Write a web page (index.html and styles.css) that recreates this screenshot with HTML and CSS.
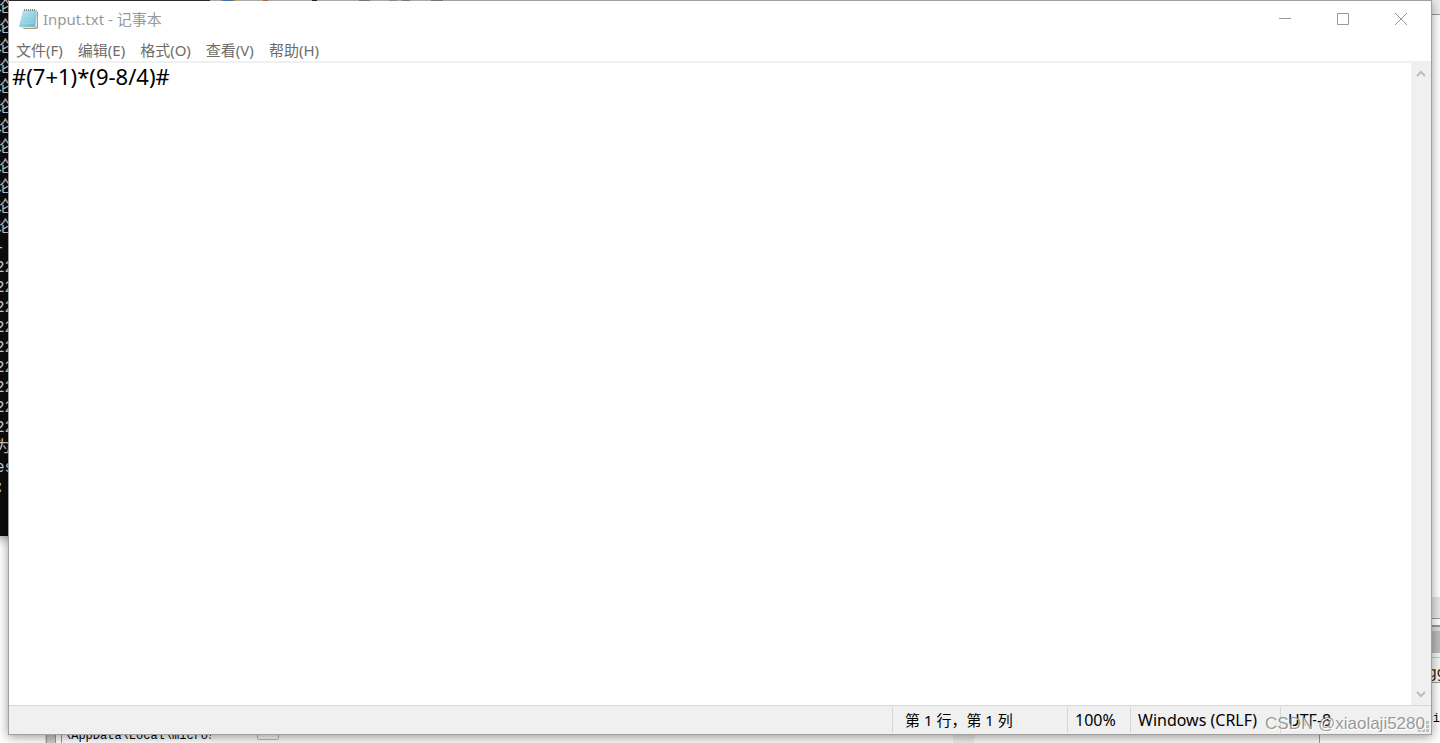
FILE: index.html
```html
<!DOCTYPE html>
<html lang="zh-CN">
<head>
<meta charset="utf-8">
<title>Input.txt - 记事本</title>
<link rel="stylesheet" href="styles.css">
</head>
<body>
<div class="desktop" aria-hidden="true">
  <div class="ide-top"></div>
  <div class="ide-side"></div>
  <div class="ide-tabs"></div>
  <div class="ide-label">gg</div>
  <div class="ide-code">#i</div>
  <div class="lower-window"><span class="rail"></span><span class="path">\AppData\Local\micros</span></div>
  <div class="lower-panel"><span class="chip"></span><span class="thumb"></span></div>
  <pre class="console">论
论
论
论
论
论
论
论
论
论
论
论
-
22
22
22
22
22
22
22
22
22
为
es
:</pre>
</div>
<main class="window">
  <div class="top-strip" aria-hidden="true"></div>
  <header class="titlebar">
    <svg class="app-icon" width="20" height="22" viewBox="0 0 20 22" aria-hidden="true">
      <defs><linearGradient id="page" x1="0" y1="0" x2="1" y2="1"><stop offset="0" stop-color="#c9edf5"/><stop offset="1" stop-color="#62b5cc"/></linearGradient></defs>
      <path d="M16 3l3 1v16l-2 1H4z" fill="#ad9873"/>
      <path d="M4 2h14v17l-3 1H2z" fill="#e4e6e0"/>
      <path d="M4 2h14l-2 17H0z" fill="url(#page)"/>
      <path d="M4 6h12M4 9h12M3 12h12M3 15h12" stroke="#9ddaea" stroke-width="1"/>
      <path d="M5.500 1v2M7.500 1v2M9.500 1v2M11.500 1v2M13.500 1v2M15.500 1v2" stroke="#758c92" stroke-width="1"/>
    </svg>
    <h1 class="title">Input.txt - 记事本</h1>
    <div class="controls">
      <button class="control" aria-label="最小化"><svg width="12" height="12" viewBox="0 0 12 12"><path d="M0 5.500h12"/></svg></button>
      <button class="control" aria-label="最大化"><svg width="12" height="12" viewBox="0 0 12 12"><path d="M.5.5h11v11H.5z"/></svg></button>
      <button class="control" aria-label="关闭"><svg width="12" height="12" viewBox="0 0 12 12"><path d="M0 0l12 12M12 0L0 12"/></svg></button>
    </div>
  </header>
  <nav class="menu">
    <button>文件(F)</button>
    <button>编辑(E)</button>
    <button>格式(O)</button>
    <button>查看(V)</button>
    <button>帮助(H)</button>
  </nav>
  <section class="editor">
    <textarea class="text" aria-label="文本编辑器" spellcheck="false">#(7+1)*(9-8/4)#</textarea>
    <div class="scrollbar">
      <button aria-label="向上滚动"><svg width="10" height="8" viewBox="0 0 10 8"><path d="M1 6l4-4 4 4"/></svg></button>
      <button aria-label="向下滚动"><svg width="10" height="8" viewBox="0 0 10 8"><path d="M1 2l4 4 4-4"/></svg></button>
    </div>
  </section>
  <footer class="status">
    <span class="cell position">第 1 行，第 1 列</span>
    <span class="cell zoom">100%</span>
    <span class="cell ending">Windows (CRLF)</span>
    <span class="cell encoding">UTF-8</span>
    <svg class="grip" width="11" height="11" viewBox="0 0 11 11" aria-hidden="true"><path d="M8 0h3v3H8zM4 4h3v3H4zM8 4h3v3H8zM0 8h3v3H0zM4 8h3v3H4zM8 8h3v3H8z"/></svg>
  </footer>
  <div class="watermark">CSDN @xiaolaji5280</div>
</main>
</body>
</html>
```
FILE: styles.css
```css
* { box-sizing: border-box; }

body {
  margin: 0;
  height: 100vh;
  overflow: hidden;
  background: #fff;
  font-family: "Noto Sans", "Noto Sans CJK SC", sans-serif;
  font-size: 15px;
}

button {
  margin: 0;
  padding: 0;
  border: 0;
  background: none;
  color: inherit;
  font: inherit;
}

.desktop {
  position: absolute;
  inset: 0;
  overflow: hidden;
  background: #fff;
}

.console {
  position: absolute;
  top: -4px;
  left: -5px;
  width: 215px;
  height: 540px;
  margin: 0;
  padding-top: 2px;
  background: #0c0c0c;
  color: #ccc;
  font: 16px/20px "Liberation Mono", "Noto Sans CJK SC", monospace;
  box-shadow: 0 2px 10px rgba(0, 0, 0, .4);
}

.ide-top {
  position: absolute;
  top: 0;
  right: 0;
  width: 200px;
  height: 15px;
  background: #eee;
  border-bottom: 1px solid #9a9aa0;
}

.ide-side {
  position: absolute;
  right: 0;
  bottom: 124px;
  width: 40px;
  height: 22px;
  background: #e6e6e6;
  border-bottom: 1px solid #9a9aa0;
}

.ide-tabs {
  position: absolute;
  right: 0;
  bottom: 60px;
  width: 40px;
  height: 58px;
  border-top: 2px solid #999;
  border-bottom: 1px solid #9a9aa0;
  background: linear-gradient(#ddd 0 4px, #bbb 4px 26px, #f4f4f4 26px 30px, #ccc 30px 31px, #f4f4f4 31px);
}

.ide-label {
  position: absolute;
  right: -6px;
  bottom: 62px;
  color: #321;
  font-size: 15px;
}

.ide-code {
  position: absolute;
  right: 0;
  bottom: 16px;
  color: #000;
  font: 12px/16px "Liberation Mono", monospace;
}

.lower-window {
  position: absolute;
  left: 45px;
  bottom: 0;
  display: flex;
  gap: 5px;
  width: 166px;
  height: 16px;
  overflow: hidden;
  border-left: 1px solid #ddd;
}

.rail {
  flex: none;
  width: 10px;
  border: solid #999;
  border-width: 0 1px;
  background: #ccc;
}

.path {
  border-left: 1px solid #999;
  padding: 1px 0 0 2px;
  color: #000;
  font: 12px/16px "Liberation Mono", monospace;
}

.lower-panel {
  position: absolute;
  left: 211px;
  right: 120px;
  bottom: 0;
  height: 16px;
  border-right: 1px solid #999;
  background: #fafafa;
}

.chip {
  position: absolute;
  left: 46px;
  bottom: 3px;
  width: 22px;
  height: 12px;
  border: 1px solid #bbb;
  border-radius: 2px;
}

.thumb {
  position: absolute;
  left: 742px;
  bottom: 0;
  width: 21px;
  height: 16px;
  background: #ececec;
}

.window {
  position: relative;
  display: flex;
  flex-direction: column;
  height: calc(100vh - 8px);
  margin: 0 8px;
  border: 1px solid #a0a0a0;
  background: #fff;
  box-shadow: 0 2px 10px rgba(0, 0, 0, .4);
}

.top-strip {
  position: absolute;
  top: -1px;
  left: 0;
  width: 436px;
  height: 1px;
  background: linear-gradient(90deg, #29292b 0 201px, #aaa 201px 210px, #c0a040 210px 213px, #3c77a8 213px 225px, #c0a040 225px 228px, #aaa 228px 254px, #c06038 254px 259px, #aaa 259px 303px, #222 303px 308px, #aaa 308px 350px, #777 350px 361px, #aaa 361px 380px, #888 380px 388px, #aaa 388px 393px, #777 393px 401px, #aaa 401px 422px, #777 422px 434px, #aaa 434px);
}

.titlebar {
  display: flex;
  align-items: center;
  height: 36px;
  padding: 0 1px 0 10px;
  color: #999;
}

.title {
  flex: 1;
  margin: 0 0 0 4px;
  padding-bottom: 2px;
  font-size: 15px;
  font-weight: 400;
}

.controls { display: flex; height: 100%; }

.control {
  display: grid;
  place-items: center;
  width: 58px;
}

.control path { fill: none; stroke: #999; }

.menu {
  display: flex;
  gap: 15px;
  height: 26px;
  padding: 0 7px;
  border-bottom: 2px solid #f0f0f0;
  color: #6d6d6d;
  font-size: 15px;
  line-height: 26px;
}

.editor {
  display: flex;
  flex: 1;
  min-height: 0;
}

.text {
  flex: 1;
  margin: 0;
  padding: 0 3px;
  border: 0;
  outline: 0;
  resize: none;
  overflow: hidden;
  background: #fff;
  color: #000;
  font: 22px/27px "Noto Sans", "Noto Sans CJK SC", sans-serif;
}

.scrollbar {
  display: flex;
  flex-direction: column;
  justify-content: space-between;
  width: 20px;
  background: #f0f0f0;
}

.scrollbar button {
  display: grid;
  place-items: center;
  height: 22px;
}

.scrollbar path { fill: none; stroke: #bdbdbd; stroke-width: 2; }

.status {
  display: flex;
  justify-content: flex-end;
  height: 29px;
  border-top: 1px solid #d7d7d7;
  background: #f0f0f0;
  color: #000;
  font-size: 16px;
  line-height: 28px;
}

.cell {
  position: relative;
  padding-left: 8px;
  white-space: nowrap;
}

.cell::before {
  content: "";
  position: absolute;
  left: 0;
  top: 1px;
  bottom: 1px;
  width: 1px;
  background: #d7d7d7;
}

.position { width: 175px; padding-left: 13px; font-size: 15px; }
.zoom { width: 63px; }
.ending { width: 150px; }
.encoding { width: 151px; }

.grip {
  position: absolute;
  right: 2px;
  bottom: 2px;
  fill: #bfbfbf;
}

.watermark {
  position: absolute;
  right: 6px;
  bottom: 0;
  color: rgba(120, 120, 120, .75);
  font: 17px/20px "Liberation Sans", sans-serif;
  text-shadow: 1px 1px 0 #fff;
  pointer-events: none;
}
```
